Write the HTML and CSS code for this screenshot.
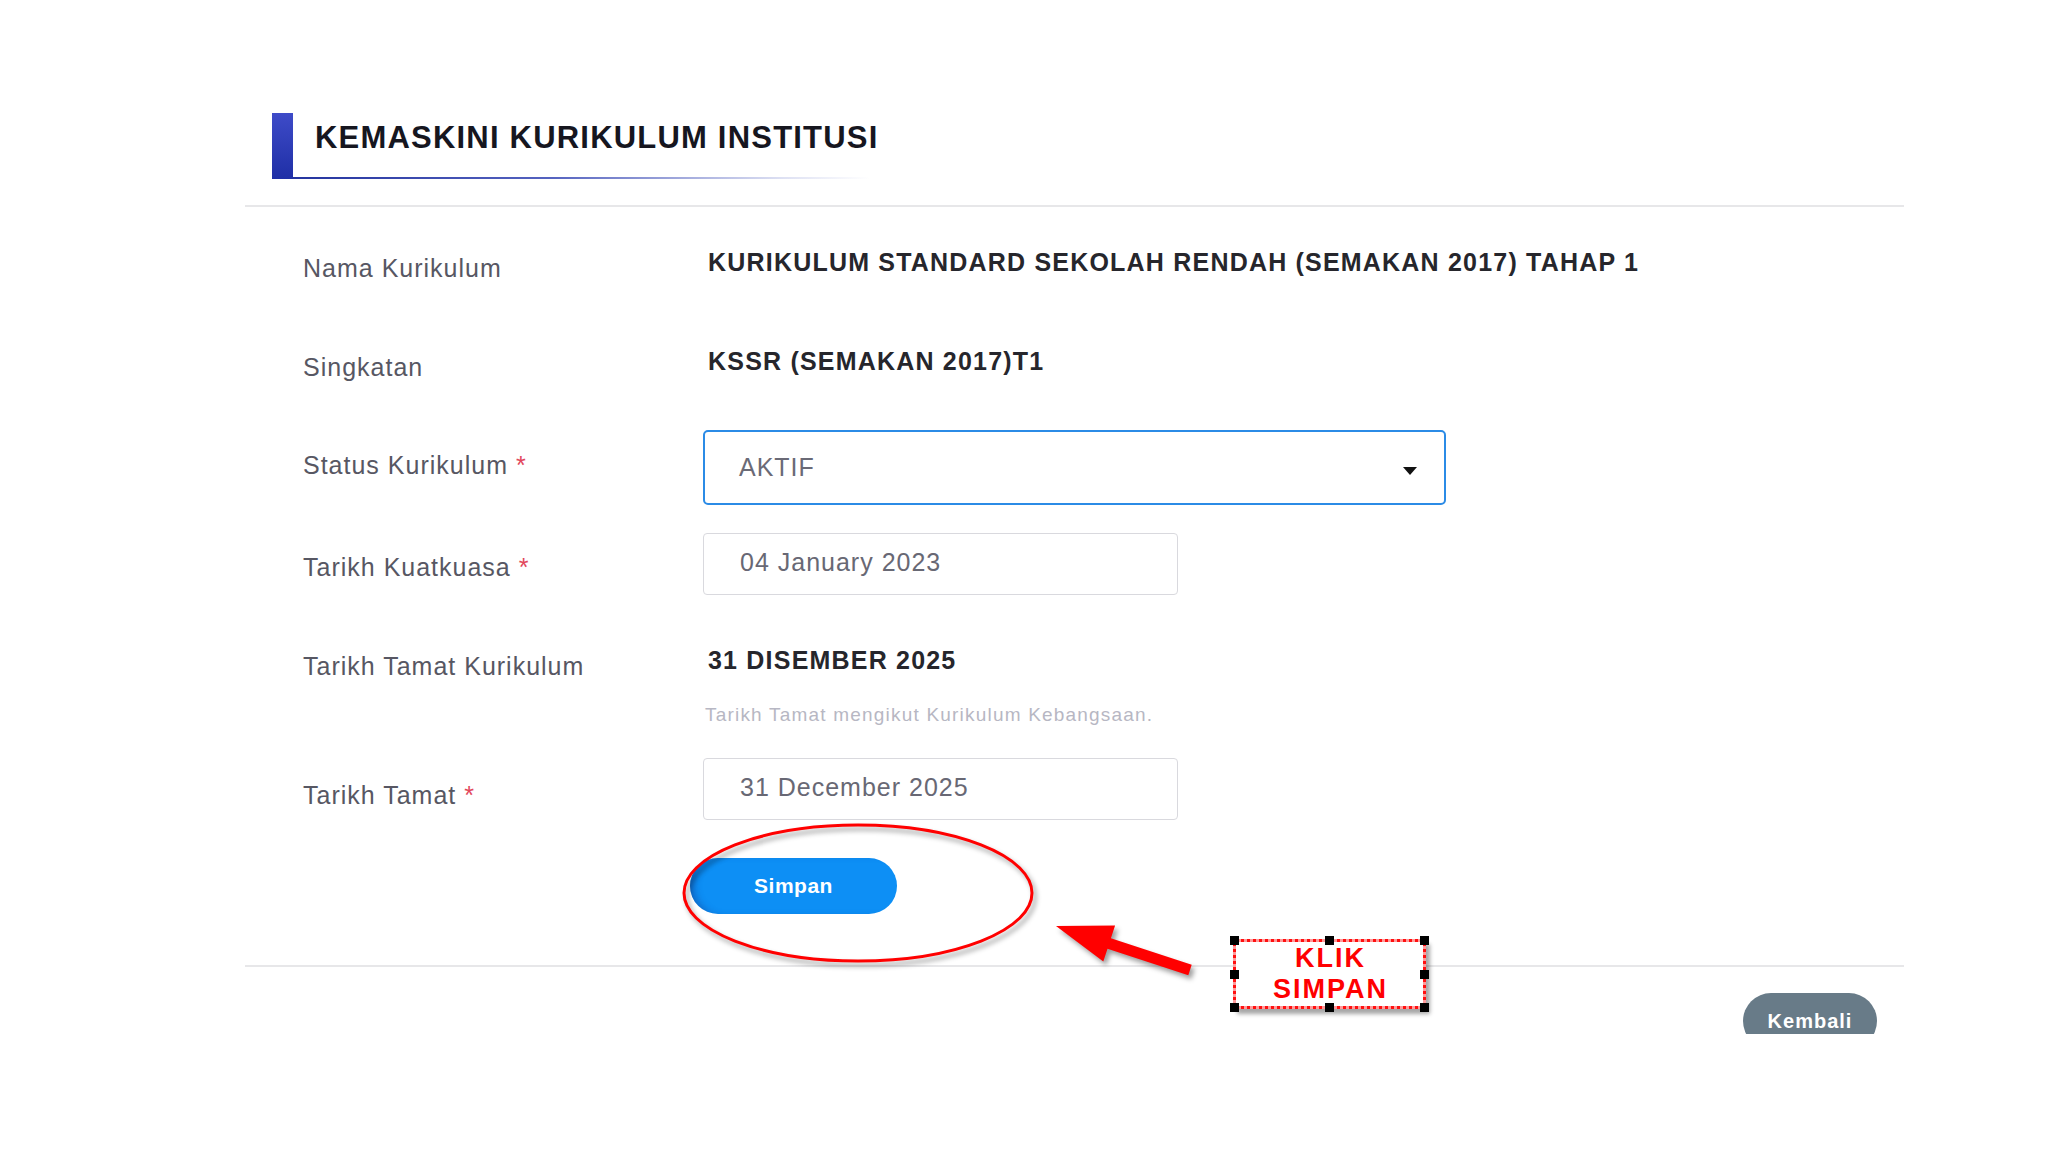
FILE: index.html
```html
<!DOCTYPE html>
<html lang="ms">
<head>
<meta charset="utf-8">
<title>Kemaskini Kurikulum Institusi</title>
<link rel="stylesheet" href="styles.css">
</head>
<body>
<div class="page">
  <div class="header">
    <div class="header-bar"></div>
    <h1 class="header-title">KEMASKINI KURIKULUM INSTITUSI</h1>
  </div>
  <div class="divider top"></div>

  <div class="form">
    <div class="row r1">
      <div class="label lbl-1">Nama Kurikulum</div>
      <div class="value text">KURIKULUM STANDARD SEKOLAH RENDAH (SEMAKAN 2017) TAHAP 1</div>
    </div>
    <div class="row r2">
      <div class="label lbl-2">Singkatan</div>
      <div class="value text">KSSR (SEMAKAN 2017)T1</div>
    </div>
    <div class="row r3">
      <div class="label lbl-3">Status Kurikulum <span class="req">*</span></div>
      <div class="value">
        <div class="select"><span>AKTIF</span><span class="caret"></span></div>
      </div>
    </div>
    <div class="row r4">
      <div class="label lbl-4">Tarikh Kuatkuasa <span class="req">*</span></div>
      <div class="value">
        <div class="input">04 January 2023</div>
      </div>
    </div>
    <div class="row r5">
      <div class="label lbl-5">Tarikh Tamat Kurikulum</div>
      <div class="value">
        <div class="text">31 DISEMBER 2025</div>
        <div class="help">Tarikh Tamat mengikut Kurikulum Kebangsaan.</div>
      </div>
    </div>
    <div class="row r6">
      <div class="label lbl-6">Tarikh Tamat <span class="req">*</span></div>
      <div class="value">
        <div class="input">31 December 2025</div>
      </div>
    </div>
    <div class="row r7">
      <div class="label"></div>
      <div class="value">
        <button class="btn-save">Simpan</button>
      </div>
    </div>
  </div>

  <div class="divider bottom"></div>
  <div class="footer">
    <div class="back-clip"><button class="btn-back">Kembali</button></div>
  </div>
</div>

<svg class="annot" width="2048" height="1152" viewBox="0 0 2048 1152">
  <ellipse class="annot-shape" cx="858" cy="893" rx="174" ry="68" fill="none" stroke="#ff0000" stroke-width="3"/>
  <polygon class="annot-shape" fill="#ff0000" points="1056,926 1115.1,925.4 1110.9,938.3 1191.7,964.8 1188.3,975.2 1107.5,948.7 1103.3,961.5"/>
</svg>

<div class="callout">
  <span class="h h-tl"></span><span class="h h-tm"></span><span class="h h-tr"></span>
  <span class="h h-ml"></span><span class="h h-mr"></span>
  <span class="h h-bl"></span><span class="h h-bm"></span><span class="h h-br"></span>
  <div class="callout-text">KLIK<br>SIMPAN</div>
</div>
</body>
</html>
```

FILE: styles.css
```css
* { box-sizing: border-box; }

html, body {
  margin: 0;
  padding: 0;
  background: #ffffff;
}

body {
  width: 2048px;
  height: 1152px;
  overflow: hidden;
  font-family: "Liberation Sans", Arial, sans-serif;
}

.page {
  padding-top: 113px;
  margin-left: 245px;
  width: 1659px;
}

/* header */
.header {
  display: flex;
  margin-left: 27px;
  height: 66px;
}

.header-bar {
  width: 21px;
  background: linear-gradient(#3e4bc8, #1f2fa6);
}

.header-title {
  margin: 0;
  width: 577px;
  padding-left: 22px;
  height: 66px;
  line-height: 50px;
  white-space: nowrap;
  font-size: 31px;
  font-weight: bold;
  letter-spacing: 1.2px;
  color: #16161f;
  background: linear-gradient(90deg, #24349f 0%, #5563c0 45%, rgba(200, 205, 235, 0.6) 85%, rgba(255, 255, 255, 0) 100%) no-repeat left bottom / 100% 2px;
}

.divider {
  height: 2px;
  background: #e7e7e9;
}
.divider.top { margin-top: 26px; }
.divider.bottom { margin-top: 51px; }

/* form */
.form {
  padding-left: 58px;
}

.row {
  display: flex;
  align-items: center;
}

.label {
  width: 400px;
  flex: none;
  font-size: 25px;
  line-height: 30px;
  letter-spacing: 1px;
  color: #575763;
}

.req { color: #e2475c; }

.value { flex: 1; }

.text {
  padding-left: 5px;
  font-size: 25px;
  line-height: 30px;
  font-weight: bold;
  letter-spacing: 1.2px;
  color: #26262c;
}

.r1 { margin-top: 21px; height: 68px; }
.r2 { margin-top: 31px; height: 68px; }
.r3 { margin-top: 35px; }
.r4 { margin-top: 28px; }
.r5 { margin-top: 50px; align-items: flex-start; }
.r6 { margin-top: 31px; }
.r7 { margin-top: 38px; }

.lbl-1 { padding-top: 11px; }
.lbl-2 { padding-top: 11px; }
.lbl-3 { padding-bottom: 6px; }
.lbl-4 { padding-top: 6px; }
.lbl-5 { margin-top: 6px; }
.lbl-6 { padding-top: 12px; }

.select {
  width: 743px;
  height: 75px;
  border: 2px solid #2b8be6;
  border-radius: 5px;
  display: flex;
  align-items: center;
  justify-content: space-between;
  padding: 0 27px 0 34px;
  font-size: 25px;
  letter-spacing: 1px;
  color: #6a6a76;
}

.caret {
  width: 0;
  height: 0;
  border-left: 7.5px solid transparent;
  border-right: 7.5px solid transparent;
  border-top: 8px solid #111111;
  margin-top: 6px;
}

.input {
  width: 475px;
  height: 62px;
  border: 1px solid #d9d9de;
  border-radius: 4px;
  display: flex;
  align-items: center;
  padding-left: 36px;
  padding-bottom: 3px;
  font-size: 25px;
  letter-spacing: 1px;
  color: #686874;
}

.help {
  margin-top: 28px;
  padding-left: 2px;
  font-size: 19px;
  line-height: 24px;
  letter-spacing: 1.2px;
  color: #b7b7c3;
}

.btn-save {
  margin-left: -13px;
  width: 207px;
  height: 56px;
  border: none;
  border-radius: 28px;
  background: #0d8ff5;
  box-shadow: inset 8px 0 8px -5px rgba(20, 40, 120, 0.45);
  color: #ffffff;
  font-family: "Liberation Sans", Arial, sans-serif;
  font-size: 21px;
  font-weight: bold;
  letter-spacing: 0.5px;
  padding: 0;
}

/* footer */
.footer {
  display: flex;
  justify-content: flex-end;
  padding-right: 27px;
  margin-top: 26px;
}

.back-clip {
  height: 41px;
  overflow: hidden;
}

.btn-back {
  width: 134px;
  height: 56px;
  border: none;
  border-radius: 28px;
  background: #687b88;
  color: #ffffff;
  font-family: "Liberation Sans", Arial, sans-serif;
  font-size: 20px;
  font-weight: bold;
  letter-spacing: 1px;
  padding: 0;
}

/* annotations overlay */
.annot {
  position: absolute;
  left: 0;
  top: 0;
  pointer-events: none;
}

.annot-shape {
  filter: drop-shadow(3px 4px 2.5px rgba(0, 0, 0, 0.38));
}

.callout {
  position: absolute;
  left: 1233px;
  top: 939px;
  width: 193px;
  height: 70px;
  border: 3px dotted #ff9a9a;
  background: linear-gradient(#ffffff, #ffffff) padding-box, #ff1010 border-box;
  box-shadow: 4px 5px 4px rgba(0, 0, 0, 0.35);
  display: flex;
  align-items: center;
  justify-content: center;
}

.callout-text {
  text-align: center;
  font-size: 27px;
  line-height: 31px;
  font-weight: bold;
  letter-spacing: 2px;
  color: #ff0000;
  padding-left: 2px;
}

.h {
  position: absolute;
  width: 9px;
  height: 9px;
  background: #000000;
}
.h-tl { left: -6px; top: -6px; }
.h-tm { left: calc(50% - 4.5px); top: -6px; }
.h-tr { right: -6px; top: -6px; }
.h-ml { left: -6px; top: calc(50% - 4.5px); }
.h-mr { right: -6px; top: calc(50% - 4.5px); }
.h-bl { left: -6px; bottom: -6px; }
.h-bm { left: calc(50% - 4.5px); bottom: -6px; }
.h-br { right: -6px; bottom: -6px; }
```
